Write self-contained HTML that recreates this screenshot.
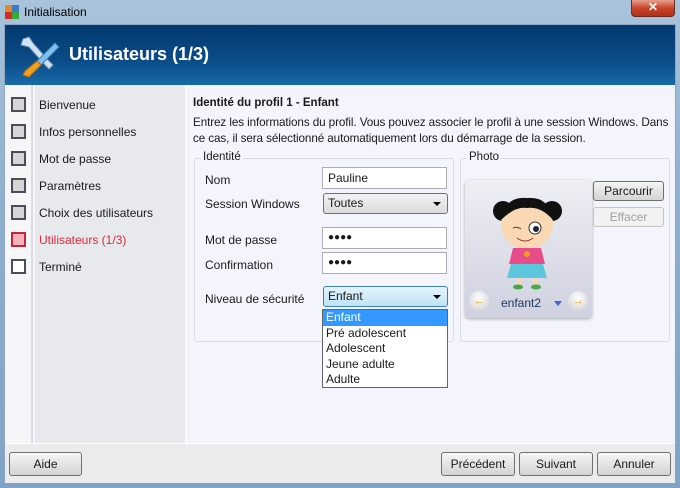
<!DOCTYPE html>
<html><head><meta charset="utf-8"><style>
*{box-sizing:border-box;margin:0;padding:0}
body{width:680px;height:488px;overflow:hidden;font-family:"Liberation Sans",sans-serif;font-size:11.5px;color:#1a1a1a;background:linear-gradient(180deg,#a9c3db 0%,#8fb0cf 40%,#7fa3c6 100%);position:relative}
.abs{position:absolute}
.title{left:24px;top:5px;font-size:12px;color:#000}
.close{left:631px;top:0;width:44px;height:17px;border:1px solid #6a2a20;border-top:none;border-radius:0 0 4px 4px;background:linear-gradient(#e8a08e,#c8442c 50%,#b03018);color:#fff;font-weight:bold;text-align:center;font-size:12px;line-height:15px}
.win{left:4px;top:24px;width:672px;height:459px;background:#f4f4fc;border:1px solid #8ea6c0}
.head{left:0;top:0;width:670px;height:60px;background:linear-gradient(180deg,#03386f,#0a4c88 60%,#1a6aa8)}
.head h1{position:absolute;left:64px;top:19px;color:#fff;font-size:18px;font-weight:bold;font-family:"Liberation Sans",sans-serif}
.strip{left:0;top:60px;width:28px;height:358px;background:#f6f6f9;border-right:2px solid #dcdce2}
.side{left:30px;top:60px;width:152px;height:358px;background:#e8e9ed;border-right:2px solid #fafafa}
.item{position:absolute;left:34px;font-size:12px}
.cb{position:absolute;left:6px;width:15px;height:15px;border:2px solid #4a4e58;background:#d6d6d6}
.foot{left:0;top:418px;width:670px;height:40px;background:#ebebee;border-top:1px solid #fff}
.btn{position:absolute;height:24px;border:1px solid #707070;border-radius:3px;background:linear-gradient(#f6f6f6,#e4e4e4 50%,#d4d4d4);text-align:center;line-height:22px;font-size:12px}
.grp{position:absolute;border:1px solid #d8dae4;border-radius:3px}
.lg{position:absolute;top:-8px;left:6px;background:#f4f4fc;padding:0 2px;font-size:11.5px}
.inp{position:absolute;height:22px;background:#fff;border:1px solid #abadb3;padding-left:5px;line-height:20px;font-size:12px}
.dots{font-size:10px;letter-spacing:0;font-weight:bold}
.sel{position:absolute;height:21px;border:1px solid #707070;border-radius:3px;background:linear-gradient(#f2f2f2,#dcdcdc);padding-left:4px;line-height:19px;font-size:12px}
.sel:after{content:"";position:absolute;right:6px;top:8px;border:4px solid transparent;border-top:4px solid #000;border-bottom:none}
.lbl{position:absolute;font-size:12px}
</style></head><body>
<div class="abs" style="left:5px;top:5px;width:14px;height:14px">
<div class="abs" style="left:0;top:0;width:7px;height:7px;background:#e48a2c"></div>
<div class="abs" style="left:7px;top:0;width:7px;height:7px;background:#3a78c8"></div>
<div class="abs" style="left:0;top:7px;width:7px;height:7px;background:#d82a2a"></div>
<div class="abs" style="left:7px;top:7px;width:7px;height:7px;background:#3aa83a"></div></div>
<div class="abs title">Initialisation</div>
<div class="abs close">✕</div>
<div class="abs win">
 <div class="abs head">
  <svg class="abs" style="left:10px;top:8px" width="48" height="46" viewBox="0 0 48 46">
   <path d="M8 6 L14 4 L18 10 L34 28 L38 32 L34 36 L30 32 L14 14 L6 12 Z" fill="#cfe3f2" stroke="#6f94b4"/>
   <path d="M40 10 L44 14 L26 32 L22 28 Z" fill="#7fc0ee" stroke="#3a7cb0"/>
   <path d="M22 28 L26 32 L14 44 L8 42 L10 38 Z" fill="#f0a020" stroke="#b06a10"/>
  </svg>
  <h1>Utilisateurs (1/3)</h1>
 </div>
 <div class="abs strip"></div>
 <div class="abs side"></div>
 <div class="cb" style="top:72px"></div><div class="item" style="top:73px">Bienvenue</div>
 <div class="cb" style="top:99px"></div><div class="item" style="top:100px">Infos personnelles</div>
 <div class="cb" style="top:126px"></div><div class="item" style="top:127px">Mot de passe</div>
 <div class="cb" style="top:153px"></div><div class="item" style="top:154px">Paramètres</div>
 <div class="cb" style="top:180px"></div><div class="item" style="top:181px">Choix des utilisateurs</div>
 <div class="cb" style="top:207px;border-color:#c0283a;background:#f7b4b8"></div><div class="item" style="top:208px;color:#e0283c">Utilisateurs (1/3)</div>
 <div class="cb" style="top:234px;background:#fff"></div><div class="item" style="top:235px">Terminé</div>

 <div class="abs" style="left:188px;top:72px;font-weight:bold;font-size:11.5px">Identité du profil 1 - Enfant</div>
 <div class="abs" style="left:188px;top:90px;width:480px;line-height:16px;font-size:11.7px;letter-spacing:-0.1px">Entrez les informations du profil. Vous pouvez associer le profil à une session Windows. Dans ce cas, il sera sélectionné automatiquement lors du démarrage de la session.</div>

 <div class="grp" style="left:189px;top:133px;width:260px;height:184px"><div class="lg">Identité</div></div>
 <div class="lbl" style="left:200px;top:148px">Nom</div>
 <div class="inp" style="left:317px;top:142px;width:125px">Pauline</div>
 <div class="lbl" style="left:200px;top:172px">Session Windows</div>
 <div class="sel" style="left:318px;top:168px;width:125px">Toutes</div>
 <div class="lbl" style="left:200px;top:208px">Mot de passe</div>
 <div class="inp dots" style="left:317px;top:202px;width:125px">●●●●</div>
 <div class="lbl" style="left:200px;top:233px">Confirmation</div>
 <div class="inp dots" style="left:317px;top:227px;width:125px">●●●●</div>
 <div class="lbl" style="left:200px;top:267px">Niveau de sécurité</div>
 <div class="sel" style="left:318px;top:261px;width:125px;background:linear-gradient(#e6f4fc,#bfe2f6);border-color:#3c7fb1">Enfant</div>
 <div class="abs" style="left:317px;top:284px;width:126px;height:79px;background:#fff;border:1px solid #646464;font-size:12px;line-height:15.5px">
  <div style="background:#3399ff;color:#fff;padding-left:3px">Enfant</div>
  <div style="padding-left:3px">Pré adolescent</div>
  <div style="padding-left:3px">Adolescent</div>
  <div style="padding-left:3px">Jeune adulte</div>
  <div style="padding-left:3px">Adulte</div>
 </div>

 <div class="grp" style="left:455px;top:133px;width:210px;height:184px"><div class="lg">Photo</div></div>
 <div class="abs" style="left:460px;top:155px;width:127px;height:138px;border-radius:4px;background:linear-gradient(#eeeef4,#d0d1e0);box-shadow:0 1px 3px #aaa">
  <svg class="abs" style="left:20px;top:6px" width="85" height="110" viewBox="0 0 85 110">
   <circle cx="18" cy="25" r="10" fill="#111"/><circle cx="67" cy="25" r="10" fill="#111"/>
   <ellipse cx="42" cy="38" rx="26" ry="25" fill="#fbd8b4"/>
   <path d="M16 34 Q20 10 42 12 Q64 10 68 34 Q56 20 42 22 Q30 20 16 34Z" fill="#111"/>
   <circle cx="50" cy="42" r="6" fill="#fff" stroke="#333"/><circle cx="51" cy="43" r="3" fill="#223"/>
   <path d="M28 42 Q32 40 36 43" stroke="#633" fill="none"/>
   <path d="M32 52 Q40 58 48 52" stroke="#933" fill="none"/>
   <path d="M28 62 L56 62 L60 78 L24 78Z" fill="#e84c8a"/>
   <circle cx="42" cy="68" r="3" fill="#f0a020"/>
   <path d="M26 78 L58 78 L62 92 L22 92Z" fill="#5cc6dc"/>
   <rect x="32" y="92" width="4" height="8" fill="#fbd8b4"/><rect x="48" y="92" width="4" height="8" fill="#fbd8b4"/>
   <ellipse cx="33" cy="101" rx="5" ry="2.5" fill="#4a4"/><ellipse cx="51" cy="101" rx="5" ry="2.5" fill="#4a4"/>
  </svg>
  <div class="abs" style="left:4px;top:111px;width:20px;height:20px;border-radius:50%;background:radial-gradient(circle at 50% 35%,#fff,#ccc);color:#f0a000;font-weight:bold;text-align:center;line-height:20px">←</div>
  <div class="abs" style="left:103px;top:111px;width:20px;height:20px;border-radius:50%;background:radial-gradient(circle at 50% 35%,#fff,#ccc);color:#f0a000;font-weight:bold;text-align:center;line-height:20px">→</div>
  <div class="abs" style="left:36px;top:116px;color:#1e3a60;font-size:12px">enfant2</div>
  <div class="abs" style="left:89px;top:121px;border:4px solid transparent;border-top:5px solid #3a6ad8;border-bottom:none"></div>
 </div>
 <div class="btn" style="left:588px;top:156px;width:71px;height:20px;line-height:18px">Parcourir</div>
 <div class="btn" style="left:588px;top:182px;width:71px;height:20px;line-height:18px;color:#a0a0a0;border-color:#c4c4c4;background:#f2f2f2">Effacer</div>

 <div class="abs foot"></div>
 <div class="btn" style="left:4px;top:427px;width:73px">Aide</div>
 <div class="btn" style="left:436px;top:427px;width:74px">Précédent</div>
 <div class="btn" style="left:514px;top:427px;width:74px">Suivant</div>
 <div class="btn" style="left:592px;top:427px;width:74px">Annuler</div>
</div>
</body></html>
